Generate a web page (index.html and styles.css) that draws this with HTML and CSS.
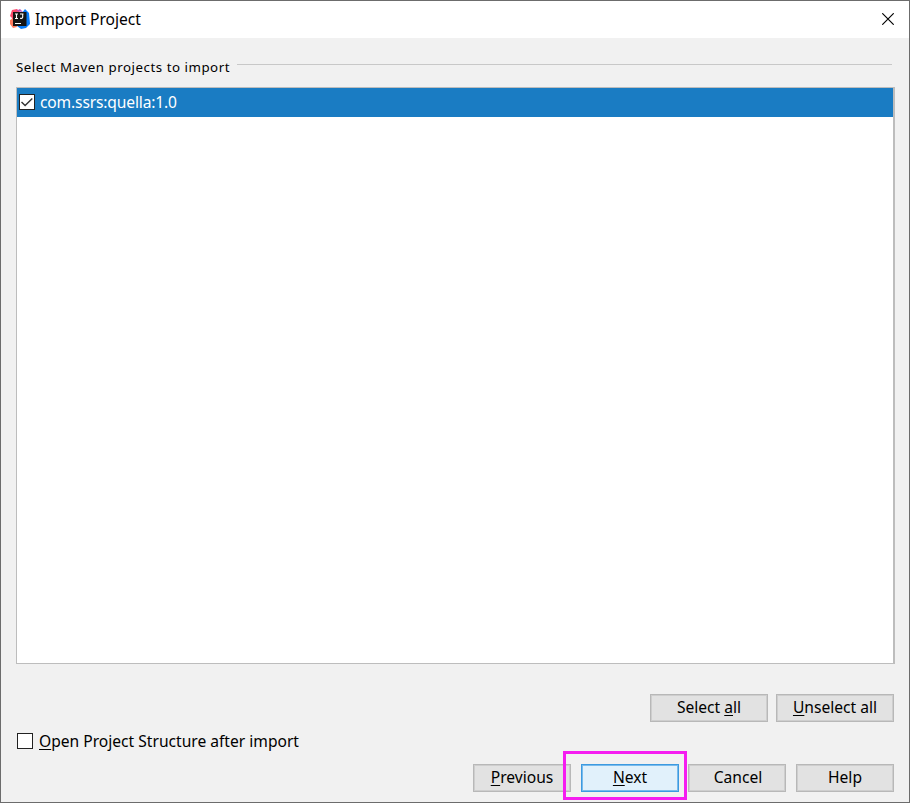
FILE: index.html
```html
<!DOCTYPE html>
<html lang="en">
<head>
<meta charset="utf-8">
<title>Import Project</title>
<link rel="stylesheet" href="styles.css">
</head>
<body>
<div class="window">
  <header class="titlebar">
    <svg class="logo" width="20" height="20" viewBox="0 0 20 20">
      <path d="M2 1l5-1 4 4-3 12-4 2-3-4 1-5-2-2z" fill="#fb496b"/>
      <path d="M0 11l4-2 3 9-4 1-3-4z" fill="#ff7b5d"/>
      <path d="M6 2l4-2 3 3z" fill="#bb55bd"/>
      <path d="M12 4l3-4 4 4 1 11-4 4-5 1-4-3z" fill="#087cfa"/>
      <path d="M3 3h13.5v14H3z" fill="#151515"/>
      <path d="M5 5h3M6.5 5v4.5M5 9.5h3M10 5h3.5M12.7 5v3q0 1.7-2.7 1.3M5 14.5h6" fill="none" stroke="#fff" stroke-width="1.1"/>
    </svg>
    <span class="title">Import Project</span>
    <svg class="close" width="12" height="12" viewBox="0 0 12 12"><path d="M.3.3l11.4 11.4M11.7.3L.3 11.7" stroke="#000" stroke-width="1.15"/></svg>
  </header>
  <main class="content">
    <div class="heading"><span class="heading-text">Select Maven projects to import</span><i class="rule"></i></div>
    <div class="list">
      <div class="row">
        <span class="check"><svg width="14" height="14" viewBox="0 0 14 14"><path d="M1.5 7l3.6 3.6L12.3 3.4" fill="none" stroke="#333" stroke-width="1.4"/></svg></span>
        <span class="row-text">com.ssrs:quella:1.0</span>
      </div>
    </div>
    <div class="selection">
      <button class="btn wide"><span>Select <u>a</u>ll</span></button>
      <button class="btn wide"><span><u>U</u>nselect all</span></button>
    </div>
    <label class="option"><span class="check"></span><span class="option-text"><u>O</u>pen Project Structure after import</span></label>
    <div class="actions">
      <button class="btn"><span><u>P</u>revious</span></button>
      <div class="next"><button class="btn primary"><span><u>N</u>ext</span></button><i class="highlight"></i></div>
      <button class="btn cancel"><span>Cancel</span></button>
      <button class="btn"><span>Help</span></button>
    </div>
  </main>
</div>
</body>
</html>
```
FILE: styles.css
```css
* { box-sizing: border-box; }
body { margin: 0; font: 15.6px/20px "Noto Sans", "Open Sans", sans-serif; color: #000; }
.window { width: 910px; height: 803px; border: 1px solid #6c6c6c; background: #f1f1f1; overflow: hidden; }
.titlebar { height: 37px; background: #fff; display: flex; align-items: center; padding: 0 15px 2px 9px; }
.logo { margin-top: 1px; }
.title { margin-left: 5px; }
.close { margin-left: auto; }
.content { padding: 19px 14px 0 15px; }
.heading { height: 20px; display: flex; align-items: flex-start; font-size: 13.3px; margin-right: 3px; }
.heading-text { letter-spacing: .52px; width: 221px; white-space: nowrap; }
.rule { flex: 1; height: 1px; background: #c8c8c8; margin-top: 7px; }
.list { margin-top: 10px; height: 577px; background: #fff; border: 1px solid #bdbdbd; border-right-width: 2px; }
.row { height: 29px; background: #1a7cc3; color: #fff; display: flex; align-items: center; padding: 0 0 2px 2px; }
.check { width: 16px; height: 16px; background: #fff; border: 1px solid #222; flex: none; display: block; }
.check svg { display: block; }
.row-text { margin-left: 5px; white-space: nowrap; letter-spacing: -.15px; }
.selection { display: flex; justify-content: flex-end; gap: 8px; margin-top: 30px; padding-right: 1px; }
.btn { width: 98px; height: 28px; padding: 0 0 2px; border: 1px solid #b8b8b8; box-shadow: inset 0 0 0 1px #cecece; background: #e2e2e2; font: inherit; line-height: 22px; color: #000; display: block; }
.btn span { white-space: nowrap; }
.wide { width: 118px; }
u { text-decoration-thickness: 1px; text-underline-offset: 2px; text-decoration-skip-ink: none; }
.option { display: flex; align-items: center; height: 20px; margin-top: 9px; padding-left: 1px; }
.option-text { margin-left: 6px; white-space: nowrap; }
.actions { display: flex; justify-content: flex-end; gap: 10px; margin-top: 13px; padding-right: 1px; }
.next { position: relative; height: 28px; }
.primary { background: #e1f1fb; border-color: #3c9ae0; box-shadow: inset 0 0 0 1px #78bbec; }
.cancel { margin-left: -1px; padding-left: 2px; }
.highlight { position: absolute; left: -18px; top: -13px; width: 124px; height: 49px; border: 3px solid #f51df0; pointer-events: none; }
```
